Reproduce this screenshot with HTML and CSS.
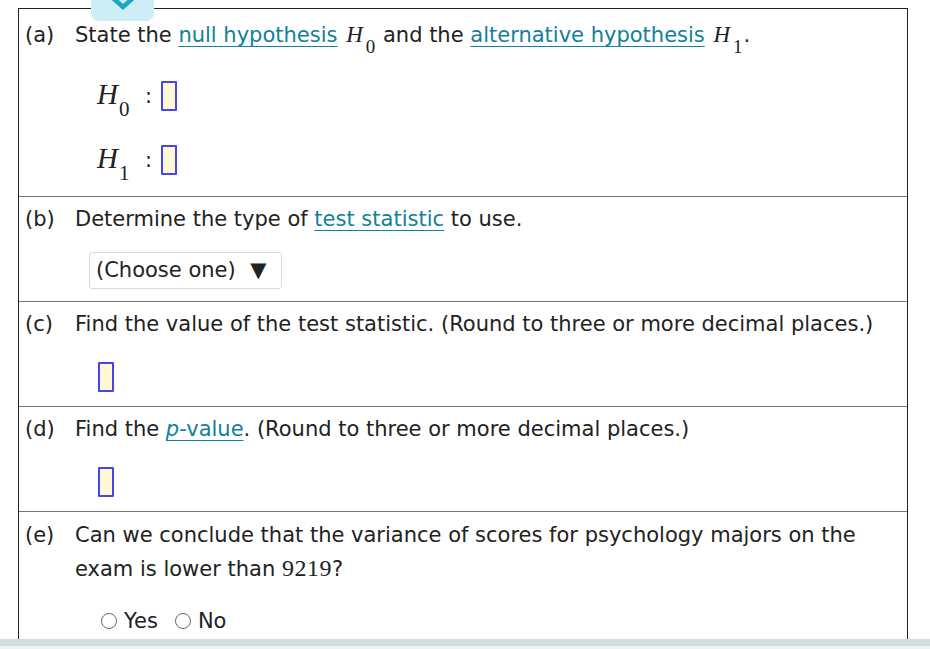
FILE: index.html
```html
<!DOCTYPE html>
<html>
<head>
<meta charset="utf-8">
<link rel="stylesheet" href="styles.css">
</head>
<body>
<div class="page">
  <div class="tab">
    <svg class="chev" width="22" height="10" viewBox="0 0 22 10"><path d="M1 -2 L11 7 L21 -2" fill="none" stroke="#19a9c6" stroke-width="4.5" stroke-linejoin="miter"/></svg>
  </div>
  <div class="box">
    <div class="row row-a">
      <div class="label">(a)</div>
      <div class="content">
        <div class="line">State the <a class="link">null hypothesis</a> <span class="m mh"><i>H</i><sub>0</sub></span> and the <a class="link">alternative hypothesis</a> <span class="m mh"><i>H</i><sub>1</sub></span>.</div>
        <div class="hyp">
          <div class="hrow"><span class="m hm"><i>H</i><sub>0</sub></span><span class="colon">:</span><span class="inp"></span></div>
          <div class="hrow"><span class="m hm"><i>H</i><sub>1</sub></span><span class="colon">:</span><span class="inp"></span></div>
        </div>
      </div>
    </div>
    <div class="row row-b">
      <div class="label">(b)</div>
      <div class="content">
        <div class="line">Determine the type of <a class="link">test statistic</a> to use.</div>
        <div class="sel">(Choose one) <span class="tri">▼</span></div>
      </div>
    </div>
    <div class="row row-c">
      <div class="label">(c)</div>
      <div class="content">
        <div class="line">Find the value of the test statistic. (Round to three or more decimal places.)</div>
        <div class="single"><span class="inp"></span></div>
      </div>
    </div>
    <div class="row row-d">
      <div class="label">(d)</div>
      <div class="content">
        <div class="line">Find the <a class="link"><i>p</i>-value</a>. (Round to three or more decimal places.)</div>
        <div class="single"><span class="inp"></span></div>
      </div>
    </div>
    <div class="row row-e">
      <div class="label">(e)</div>
      <div class="content">
        <div class="line">Can we conclude that the variance of scores for psychology majors on the exam is lower than <span class="num">9219</span>?</div>
        <div class="radios">
          <span class="radio"><span class="circ"></span>Yes</span>
          <span class="radio"><span class="circ"></span>No</span>
        </div>
      </div>
    </div>
  </div>
  <div class="footer"></div>
</div>
</body>
</html>
```

FILE: styles.css
```css
html, body {
  margin: 0;
  padding: 0;
  background: #fff;
}
body {
  width: 930px;
  height: 649px;
  overflow: hidden;
  font-family: "DejaVu Sans", Verdana, sans-serif;
  font-size: 21px;
  color: #222;
}
.page {
  position: relative;
  width: 930px;
  height: 649px;
  display: flex;
  flex-direction: column;
}
.tab {
  position: absolute;
  left: 91px;
  top: -10px;
  width: 63px;
  height: 31px;
  background: #cdeef4;
  border-radius: 8px;
  z-index: 2;
}
.chev {
  position: absolute;
  left: 21px;
  top: 10px;
}
.box {
  margin: 8px 0 0 18px;
  width: 888px;
  height: 630px;
  border: 1px solid #222;
  border-bottom: none;
  overflow: hidden;
  flex: none;
}
.footer {
  flex: 1;
  background: linear-gradient(#d3dcdf 0, #d3dcdf 7px, #edf1f2 7px);
}
.row {
  display: flex;
  border-top: 1px solid #777;
  padding-left: 6px;
  box-sizing: border-box;
}
.row:first-child {
  border-top: none;
}
.label {
  width: 50px;
  flex: none;
  line-height: 33px;
}
.content {
  flex: 1;
}
.line {
  line-height: 33px;
}
.link {
  color: #12809a;
  text-decoration: underline;
  text-decoration-thickness: 1px;
  text-underline-offset: 4px;
}
.m {
  font-family: "Liberation Serif", "Times New Roman", serif;
  font-size: 23px;
  line-height: 0;
}
.mh {
  margin-left: 2px;
  margin-right: 1px;
}
.m i {
  font-style: italic;
}
.m sub {
  font-size: 19px;
  vertical-align: -11px;
  line-height: 0;
  margin-left: 3px;
}
.row-a {
  height: 187px;
  padding-top: 10px;
}
.row-a .line {
  height: 33px;
}
.hyp {
  margin-top: 29px;
  padding-left: 22px;
  display: flex;
  flex-direction: column;
  gap: 34px;
}
.hrow {
  display: flex;
  align-items: center;
  height: 30px;
}
.hm {
  width: 48px;
  flex: none;
  font-size: 29px;
  line-height: 30px;
  height: 30px;
  position: relative;
  top: -2px;
}
.hm sub {
  font-size: 21px;
  vertical-align: -12px;
  margin-left: 1px;
}
.colon {
  width: 16px;
  flex: none;
  line-height: 30px;
}
.inp {
  display: inline-block;
  width: 12px;
  height: 26px;
  border: 2px solid #4444f4;
  background: #fff8d2;
  border-radius: 1px;
  box-sizing: content-box;
  vertical-align: top;
}
.row-b, .row-c, .row-d {
  height: 105px;
  padding-top: 6px;
}
.sel {
  margin-top: 16px;
  margin-left: 14px;
  width: 193px;
  height: 37px;
  box-sizing: border-box;
  border: 1px solid #d9d9d9;
  border-radius: 3px;
  padding-left: 6px;
  line-height: 35px;
}
.tri {
  font-size: 21px;
  margin-left: 8px;
}
.single {
  margin-top: 21px;
  margin-left: 23px;
  height: 30px;
}
.row-e {
  padding-top: 7px;
}
.num {
  font-family: "Liberation Serif", "Times New Roman", serif;
  font-size: 24px;
  letter-spacing: 0.5px;
}
.radios {
  margin-top: 20px;
  margin-left: 26px;
  display: flex;
  gap: 17px;
  line-height: 30px;
}
.radio {
  display: flex;
  align-items: center;
}
.circ {
  display: inline-block;
  width: 14px;
  height: 14px;
  border: 1px solid #666;
  border-radius: 50%;
  margin-right: 7px;
}
```
